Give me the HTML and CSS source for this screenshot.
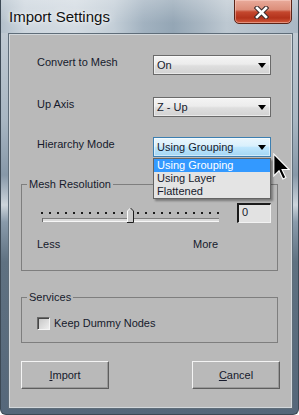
FILE: index.html
```html
<!DOCTYPE html>
<html lang="en">

<head>
    <meta charset="utf-8">
    <title>Import Settings</title>
    <link rel="stylesheet" href="styles.css">
</head>

<body>
    <div class="window">
        <div class="titlebar">
            <span class="title">Import Settings</span>
            <button class="closebtn" aria-label="Close">
                <svg width="15" height="13" viewBox="0 0 15 13">
                    <path d="M3 2 L12 11 M12 2 L3 11" stroke="#3b2b2b" stroke-width="4.6" stroke-linecap="square" fill="none" />
                    <path d="M3 2 L12 11 M12 2 L3 11" stroke="#fff" stroke-width="2.6" stroke-linecap="square" fill="none" />
                </svg>
            </button>
        </div>

        <div class="client">
            <div class="row first">
                <label>Convert to Mesh</label>
                <div class="combo">On<span class="arrow"></span></div>
            </div>
            <div class="row second">
                <label>Up Axis</label>
                <div class="combo">Z - Up<span class="arrow"></span></div>
            </div>
            <div class="row third">
                <label>Hierarchy Mode</label>
                <div class="combo active">Using Grouping<span class="arrow"></span>
                    <ul class="droplist">
                        <li class="sel">Using Grouping</li>
                        <li>Using Layer</li>
                        <li>Flattened</li>
                    </ul>
                </div>
            </div>

            <fieldset class="group mesh">
                <legend>Mesh Resolution</legend>
                <div class="sliderrow">
                    <svg class="slider" width="180" height="20" viewBox="0 0 180 20">
                        <g fill="#1c1c1c">
                            <rect x="0" y="9" width="2" height="2" /><rect x="8" y="9" width="2" height="2" />
                            <rect x="16" y="9" width="2" height="2" /><rect x="24" y="9" width="2" height="2" />
                            <rect x="32" y="9" width="2" height="2" /><rect x="40" y="9" width="2" height="2" />
                            <rect x="48" y="9" width="2" height="2" /><rect x="56" y="9" width="2" height="2" />
                            <rect x="64" y="9" width="2" height="2" /><rect x="72" y="9" width="2" height="2" />
                            <rect x="80" y="9" width="2" height="2" /><rect x="96" y="9" width="2" height="2" />
                            <rect x="104" y="9" width="2" height="2" /><rect x="112" y="9" width="2" height="2" />
                            <rect x="120" y="9" width="2" height="2" /><rect x="128" y="9" width="2" height="2" />
                            <rect x="136" y="9" width="2" height="2" /><rect x="144" y="9" width="2" height="2" />
                            <rect x="152" y="9" width="2" height="2" /><rect x="160" y="9" width="2" height="2" />
                            <rect x="168" y="9" width="2" height="2" /><rect x="176" y="9" width="2" height="2" />
                        </g>
                        <rect x="1" y="15" width="177" height="1" fill="#808080" />
                        <rect x="1" y="16" width="177" height="2" fill="#dadada" />
                        <rect x="1" y="18" width="177" height="1" fill="#f6f6f6" />
                        <rect x="1" y="15" width="1" height="4" fill="#6a6a6a" />
                        <polygon points="86,8 89.5,4.5 93,8 93,20 86,20" fill="#cacaca" />
                        <polyline points="86.5,19.5 86.5,8 89.5,5" stroke="#fff" fill="none" />
                        <polyline points="89.5,5 92.5,8 92.5,19.5 86,19.5" stroke="#1e1e1e" fill="none" />
                    </svg>
                    <div class="spin">0</div>
                </div>
                <div class="ends">
                    <span class="less">Less</span>
                    <span>More</span>
                </div>
            </fieldset>

            <fieldset class="group services">
                <legend>Services</legend>
                <label class="check"><span class="box"></span>Keep Dummy Nodes</label>
            </fieldset>

            <div class="buttons">
                <button class="btn"><u>I</u>mport</button>
                <button class="btn"><u>C</u>ancel</button>
            </div>
        </div>

        <!-- mouse pointer over the open list -->
        <svg class="cursor" width="17" height="27" viewBox="0 0 12.4 19.4">
            <path d="M0.6 0.6 L0.6 16.6 L4.4 12.8 L7.2 18.8 L9.4 17.8 L6.6 11.9 L11.8 11.9 Z" fill="#000" stroke="#fff" stroke-width="0.8" stroke-linejoin="miter" />
        </svg>
    </div>
</body>

</html>
```

FILE: styles.css
```css
/* base */
* {
    box-sizing: border-box;
}

body {
    margin: 0;
    width: 299px;
    height: 415px;
    overflow: hidden;
    font-family: "Liberation Sans", Arial, sans-serif;
    font-size: 11px;
    color: #161a2c;
    background: #fff;
}

/* window frame */
.window {
    position: relative;
    width: 299px;
    height: 415px;
    display: flex;
    flex-direction: column;
    padding: 0 5px 5px 7px;
    border: 1px solid #3c4955;
    border-top: none;
    border-radius: 0 0 6px 6px;
    background:
        linear-gradient(to bottom, rgba(255, 255, 255, 0.25), rgba(255, 255, 255, 0) 70%) 0 0 / 100% 33px no-repeat,
        linear-gradient(to right, #b3c0cb 0%, #cdd6de 8%, #d3dbe2 25%, #c3ced7 38%, #a2b2c0 48%, #94a6b5 58%, #a9b7c3 68%, #bdc8d1 76%, #aab8c5 100%) 0 0 / 100% 33px no-repeat,
        linear-gradient(to bottom, #bfc9d2 33px, #a8b6c2 120px, #8798a8 175px, #cdd5dc 205px, #8a9bab 222px, #5f7181 262px, #55677a 100%);
}

.titlebar {
    height: 33px;
    display: flex;
    justify-content: space-between;
    align-items: flex-start;
    padding-left: 1px;
}

.title {
    margin-top: 7px;
    font-size: 15px;
    line-height: 20px;
    color: #111;
    text-shadow: 0 0 8px rgba(255, 255, 255, 0.9), 0 0 3px rgba(255, 255, 255, 0.8);
}

.closebtn {
    width: 58px;
    height: 25px;
    margin: -1px 1px 0 0;
    padding: 0;
    display: flex;
    align-items: center;
    justify-content: center;
    border: 1px solid #5a2418;
    border-radius: 0 0 5px 5px;
    background: linear-gradient(to bottom, #e9ab9b 0%, #dc8e7a 42%, #c4472e 52%, #b3321b 78%, #d25a3c 100%);
    box-shadow: inset 0 0 0 1px rgba(255, 220, 210, 0.45);
}

.closebtn svg {
    margin: 1px 3px 0 0;
}

/* dialog body */
.client {
    flex: 1;
    position: relative;
    border: 1px solid #5f6d79;
    background: #b9b9b9;
    box-shadow: inset 0 0 0 1px #d3d8dc;
}

.row {
    display: flex;
    align-items: flex-start;
    padding-left: 28px;
}

.row.first {
    margin-top: 21px;
}

.row.second {
    margin-top: 22px;
}

.row.third {
    margin-top: 20px;
}

.row label {
    width: 116px;
    line-height: 14px;
}

/* combo boxes */
.combo {
    position: relative;
    width: 118px;
    height: 20px;
    padding-left: 3px;
    line-height: 18px;
    border: 1px solid #6a6a6a;
    background: linear-gradient(to bottom, #f4f4f4 0%, #ececec 45%, #dedede 55%, #d2d2d2 100%);
    box-shadow: inset 0 0 0 1px rgba(255, 255, 255, 0.5);
}

.combo.active {
    border-color: #3c7fb1;
    background: linear-gradient(to bottom, #eaf6fd 0%, #d9f0fc 45%, #bee6fd 52%, #a3d6f3 100%);
}

.arrow {
    position: absolute;
    right: 4px;
    top: 7px;
    width: 0;
    height: 0;
    border-left: 4.5px solid transparent;
    border-right: 4.5px solid transparent;
    border-top: 5px solid #000;
}

.droplist {
    position: absolute;
    top: 20px;
    left: -1px;
    width: 118px;
    margin: 0;
    padding: 0;
    list-style: none;
    border: 1px solid #646464;
    background: #e4e4e4;
    box-shadow: 2px 2px 2px rgba(0, 0, 0, 0.35);
    z-index: 2;
}

.droplist li {
    padding-left: 3px;
    line-height: 13px;
    color: #161a2c;
}

.droplist li.sel {
    background: #3399ff;
    color: #fff;
}

/* group boxes */
.group {
    margin: 0 14px 0 12px;
    padding: 0 0 0 0;
    min-width: 0;
    border: 1px solid #7e7e7e;
}

.group legend {
    margin-left: 5px;
    padding: 0 2px;
    line-height: 14px;
}

.group.mesh {
    margin-top: 20px;
    padding-bottom: 19px;
}

.group.services {
    margin-top: 19px;
    padding-bottom: 12px;
}

.sliderrow {
    display: flex;
    margin-top: 12px;
    padding-left: 19px;
}

.slider {
    display: block;
}

.spin {
    width: 34px;
    height: 20px;
    margin-left: 16px;
    padding: 0 3px;
    line-height: 14px;
    border-style: solid;
    border-width: 2px 1px 1px 2px;
    border-color: #1a1a1a #f2f2f2 #f2f2f2 #1a1a1a;
    background: #e2e2e2;
}

.ends {
    display: flex;
    margin-top: 14px;
    padding-left: 15px;
    line-height: 14px;
}

.ends .less {
    width: 156px;
}

.check {
    display: flex;
    align-items: center;
    margin-top: 13px;
    padding-left: 15px;
    line-height: 13px;
}

.check .box {
    width: 13px;
    height: 13px;
    margin-right: 4px;
    border: 1px solid;
    border-color: #6a6a6a #f4f4f4 #f4f4f4 #6a6a6a;
    background: linear-gradient(135deg, #c4c4c4, #eeeeee);
    box-shadow: inset 1px 1px 0 #454545;
}

/* buttons */
.buttons {
    display: flex;
    justify-content: space-between;
    margin: 18px 12px 0 12px;
}

.btn {
    width: 88px;
    height: 28px;
    padding: 0;
    font-family: inherit;
    font-size: 11px;
    color: #161a2c;
    border: 1px solid;
    border-color: #f4f4f4 #5e5e5e #5e5e5e #f4f4f4;
    background: #b9b9b9;
    box-shadow: inset -1px -1px 0 #999;
}

/* pointer */
.cursor {
    position: absolute;
    left: 272px;
    top: 153px;
    z-index: 3;
}
```
